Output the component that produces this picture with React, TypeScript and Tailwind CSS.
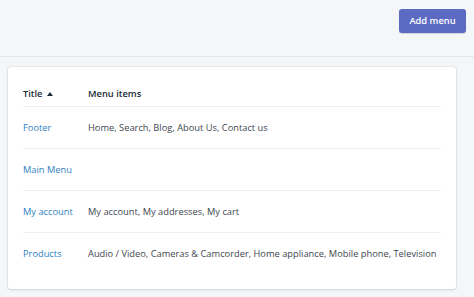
const menus = [
  { title: 'Footer', items: 'Home, Search, Blog, About Us, Contact us' },
  { title: 'Main Menu', items: '' },
  { title: 'My account', items: 'My account, My addresses, My cart' },
  { title: 'Products', items: 'Audio / Video, Cameras & Camcorder, Home appliance, Mobile phone, Television' },
];

export default function App() {
  return (
    <div
      className="w-[474px] h-[297px] bg-[#f4f6f8] overflow-hidden text-[#212b36]"
      style={{ fontFamily: '"Open Sans", "Noto Sans", sans-serif' }}
    >
      {/* Top bar */}
      <div className="h-[57px] border-b border-[#e6e9ec] flex justify-end items-start pt-[9px] pr-[8px]">
        <button className="h-[24px] w-[67px] rounded-[3px] bg-[#5c6ac4] text-white text-[9.3px] font-semibold shadow-[0_1px_1px_rgba(0,0,0,0.15)]">
          Add menu
        </button>
      </div>

      {/* Card */}
      <div className="mt-[10px] mx-[8px] w-[448px] h-[222px] bg-white rounded-[3px] shadow-[0_0_0_1px_rgba(63,63,68,0.05),0_1px_3px_rgba(63,63,68,0.15)] px-[15px] pt-[15px]">
        <div className="flex items-center h-[25px] border-b border-[#eef0f2] text-[9.3px] font-semibold">
          <div className="w-[65px] shrink-0 flex items-center gap-[5px]">
            Title
            <svg width="6" height="4" viewBox="0 0 6 4"><path d="M0 4 L3 0 L6 4 Z" fill="#212b36" /></svg>
          </div>
          <div>Menu items</div>
        </div>
        {menus.map((m, i) => (
          <div
            key={m.title}
            className={`flex items-center h-[42px] text-[9.3px] whitespace-nowrap ${i < menus.length - 1 ? 'border-b border-[#eef0f2]' : ''}`}
          >
            <div className="w-[65px] shrink-0 text-[#2f7fc1]">{m.title}</div>
            <div className="text-[#3e4750]">{m.items}</div>
          </div>
        ))}
      </div>
    </div>
  );
}
